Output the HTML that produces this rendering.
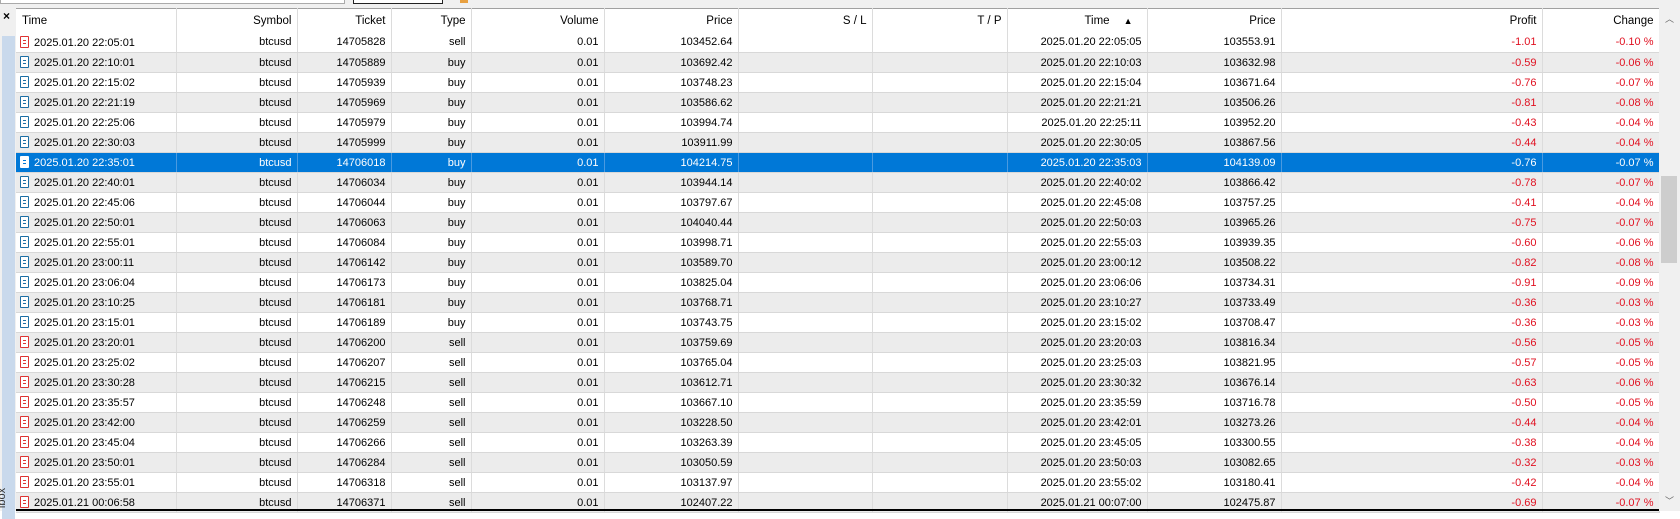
<!DOCTYPE html>
<html><head><meta charset="utf-8"><style>
*{margin:0;padding:0;box-sizing:border-box}
body{width:1680px;height:511px;overflow:hidden;background:#fff;font-family:"Liberation Sans",Arial,sans-serif;font-size:11px;color:#000;position:relative}
#top{position:absolute;left:0;top:0;width:1680px;height:8px;background:#f0f0f0}
#b1{position:absolute;left:0;top:-2px;width:345px;height:6px;background:#fff;border:1px solid #aaa}
#b2{position:absolute;left:353px;top:-2px;width:90px;height:6px;background:#fff;border:1px solid #222}
#o{position:absolute;left:460px;top:0;width:8px;height:3px;background:#e8a040}
#side{position:absolute;left:0;top:8px;width:16px;height:503px;background:#f0f0f0}
#strip{position:absolute;left:2px;top:28px;width:13px;height:483px;background:#c9d9ec}
#x{position:absolute;left:3px;top:9px;font-size:12px;font-weight:bold}
#lbl{position:absolute;left:-8px;top:492px;transform:rotate(-90deg);font-size:11px;color:#333}
table{position:absolute;left:16px;top:8px;border-collapse:collapse;table-layout:fixed;width:1643px}
td,th{height:20px;padding:0 5px 0 0;text-align:right;white-space:nowrap;overflow:hidden;border-right:1px solid #dcdcdc;border-bottom:1px solid #d8d8d8;font-weight:normal}
th{height:24px;border-top:1px solid #a0a0a0;border-bottom:none;font-size:11.5px;background:#fff}
th:first-child{text-align:left;padding-left:6px}
th.t{padding-right:14px}
th.t span{font-size:9px;margin-left:14px}
td:first-child{text-align:left;padding-left:4px}
tr:nth-child(odd) td{background:#ececec}
td.r{color:#e01020}
tr.s td{background:#0078d7!important;color:#fff!important;border-right-color:#4a9ae0}
.i{display:inline-block;width:9px;height:12px;border:1px solid #d33;border-radius:1px;vertical-align:-2px;margin-right:5px;position:relative;background:#fff}
.i:before,.i:after{content:"";position:absolute;left:2px;width:3px;height:1px;background:#d33}
.i:before{top:3px}.i:after{top:6px}
.b{border-color:#1c6ea4}.b:before,.b:after{background:#1c6ea4}
tr.s .i{border-color:#fff;background:#fff}tr.s .i:before,tr.s .i:after{background:#0078d7}
#sb{position:absolute;left:1659px;top:8px;width:21px;height:503px;background:#f0f0f0}
#th{position:absolute;left:1661px;top:176px;width:16px;height:87px;background:#cdcdcd}
#up,#dn{position:absolute;left:1665px;font-size:9px;color:#666}
#up{top:12px}#dn{top:494px}
#bot{position:absolute;left:16px;top:509px;width:1643px;height:2px;background:#000}
</style></head><body>
<div id="top"><div id="b1"></div><div id="b2"></div><div id="o"></div></div>
<div id="side"><div id="strip"></div></div><div id="x">×</div><div id="lbl">lbox</div>
<table>
<colgroup><col style="width:160px"><col style="width:121px"><col style="width:94px"><col style="width:80px"><col style="width:133px"><col style="width:134px"><col style="width:134px"><col style="width:135px"><col style="width:140px"><col style="width:134px"><col style="width:261px"><col style="width:117px"></colgroup>
<tr><th>Time</th><th>Symbol</th><th>Ticket</th><th>Type</th><th>Volume</th><th>Price</th><th>S / L</th><th>T / P</th><th class="t">Time<span>▲</span></th><th>Price</th><th>Profit</th><th>Change</th></tr>
<tr><td><i class="i"></i>2025.01.20 22:05:01</td><td>btcusd</td><td>14705828</td><td>sell</td><td>0.01</td><td>103452.64</td><td></td><td></td><td>2025.01.20 22:05:05</td><td>103553.91</td><td class="r">-1.01</td><td class="r">-0.10 %</td></tr>
<tr><td><i class="i b"></i>2025.01.20 22:10:01</td><td>btcusd</td><td>14705889</td><td>buy</td><td>0.01</td><td>103692.42</td><td></td><td></td><td>2025.01.20 22:10:03</td><td>103632.98</td><td class="r">-0.59</td><td class="r">-0.06 %</td></tr>
<tr><td><i class="i b"></i>2025.01.20 22:15:02</td><td>btcusd</td><td>14705939</td><td>buy</td><td>0.01</td><td>103748.23</td><td></td><td></td><td>2025.01.20 22:15:04</td><td>103671.64</td><td class="r">-0.76</td><td class="r">-0.07 %</td></tr>
<tr><td><i class="i b"></i>2025.01.20 22:21:19</td><td>btcusd</td><td>14705969</td><td>buy</td><td>0.01</td><td>103586.62</td><td></td><td></td><td>2025.01.20 22:21:21</td><td>103506.26</td><td class="r">-0.81</td><td class="r">-0.08 %</td></tr>
<tr><td><i class="i b"></i>2025.01.20 22:25:06</td><td>btcusd</td><td>14705979</td><td>buy</td><td>0.01</td><td>103994.74</td><td></td><td></td><td>2025.01.20 22:25:11</td><td>103952.20</td><td class="r">-0.43</td><td class="r">-0.04 %</td></tr>
<tr><td><i class="i b"></i>2025.01.20 22:30:03</td><td>btcusd</td><td>14705999</td><td>buy</td><td>0.01</td><td>103911.99</td><td></td><td></td><td>2025.01.20 22:30:05</td><td>103867.56</td><td class="r">-0.44</td><td class="r">-0.04 %</td></tr>
<tr class="s"><td><i class="i b"></i>2025.01.20 22:35:01</td><td>btcusd</td><td>14706018</td><td>buy</td><td>0.01</td><td>104214.75</td><td></td><td></td><td>2025.01.20 22:35:03</td><td>104139.09</td><td class="r">-0.76</td><td class="r">-0.07 %</td></tr>
<tr><td><i class="i b"></i>2025.01.20 22:40:01</td><td>btcusd</td><td>14706034</td><td>buy</td><td>0.01</td><td>103944.14</td><td></td><td></td><td>2025.01.20 22:40:02</td><td>103866.42</td><td class="r">-0.78</td><td class="r">-0.07 %</td></tr>
<tr><td><i class="i b"></i>2025.01.20 22:45:06</td><td>btcusd</td><td>14706044</td><td>buy</td><td>0.01</td><td>103797.67</td><td></td><td></td><td>2025.01.20 22:45:08</td><td>103757.25</td><td class="r">-0.41</td><td class="r">-0.04 %</td></tr>
<tr><td><i class="i b"></i>2025.01.20 22:50:01</td><td>btcusd</td><td>14706063</td><td>buy</td><td>0.01</td><td>104040.44</td><td></td><td></td><td>2025.01.20 22:50:03</td><td>103965.26</td><td class="r">-0.75</td><td class="r">-0.07 %</td></tr>
<tr><td><i class="i b"></i>2025.01.20 22:55:01</td><td>btcusd</td><td>14706084</td><td>buy</td><td>0.01</td><td>103998.71</td><td></td><td></td><td>2025.01.20 22:55:03</td><td>103939.35</td><td class="r">-0.60</td><td class="r">-0.06 %</td></tr>
<tr><td><i class="i b"></i>2025.01.20 23:00:11</td><td>btcusd</td><td>14706142</td><td>buy</td><td>0.01</td><td>103589.70</td><td></td><td></td><td>2025.01.20 23:00:12</td><td>103508.22</td><td class="r">-0.82</td><td class="r">-0.08 %</td></tr>
<tr><td><i class="i b"></i>2025.01.20 23:06:04</td><td>btcusd</td><td>14706173</td><td>buy</td><td>0.01</td><td>103825.04</td><td></td><td></td><td>2025.01.20 23:06:06</td><td>103734.31</td><td class="r">-0.91</td><td class="r">-0.09 %</td></tr>
<tr><td><i class="i b"></i>2025.01.20 23:10:25</td><td>btcusd</td><td>14706181</td><td>buy</td><td>0.01</td><td>103768.71</td><td></td><td></td><td>2025.01.20 23:10:27</td><td>103733.49</td><td class="r">-0.36</td><td class="r">-0.03 %</td></tr>
<tr><td><i class="i b"></i>2025.01.20 23:15:01</td><td>btcusd</td><td>14706189</td><td>buy</td><td>0.01</td><td>103743.75</td><td></td><td></td><td>2025.01.20 23:15:02</td><td>103708.47</td><td class="r">-0.36</td><td class="r">-0.03 %</td></tr>
<tr><td><i class="i"></i>2025.01.20 23:20:01</td><td>btcusd</td><td>14706200</td><td>sell</td><td>0.01</td><td>103759.69</td><td></td><td></td><td>2025.01.20 23:20:03</td><td>103816.34</td><td class="r">-0.56</td><td class="r">-0.05 %</td></tr>
<tr><td><i class="i"></i>2025.01.20 23:25:02</td><td>btcusd</td><td>14706207</td><td>sell</td><td>0.01</td><td>103765.04</td><td></td><td></td><td>2025.01.20 23:25:03</td><td>103821.95</td><td class="r">-0.57</td><td class="r">-0.05 %</td></tr>
<tr><td><i class="i"></i>2025.01.20 23:30:28</td><td>btcusd</td><td>14706215</td><td>sell</td><td>0.01</td><td>103612.71</td><td></td><td></td><td>2025.01.20 23:30:32</td><td>103676.14</td><td class="r">-0.63</td><td class="r">-0.06 %</td></tr>
<tr><td><i class="i"></i>2025.01.20 23:35:57</td><td>btcusd</td><td>14706248</td><td>sell</td><td>0.01</td><td>103667.10</td><td></td><td></td><td>2025.01.20 23:35:59</td><td>103716.78</td><td class="r">-0.50</td><td class="r">-0.05 %</td></tr>
<tr><td><i class="i"></i>2025.01.20 23:42:00</td><td>btcusd</td><td>14706259</td><td>sell</td><td>0.01</td><td>103228.50</td><td></td><td></td><td>2025.01.20 23:42:01</td><td>103273.26</td><td class="r">-0.44</td><td class="r">-0.04 %</td></tr>
<tr><td><i class="i"></i>2025.01.20 23:45:04</td><td>btcusd</td><td>14706266</td><td>sell</td><td>0.01</td><td>103263.39</td><td></td><td></td><td>2025.01.20 23:45:05</td><td>103300.55</td><td class="r">-0.38</td><td class="r">-0.04 %</td></tr>
<tr><td><i class="i"></i>2025.01.20 23:50:01</td><td>btcusd</td><td>14706284</td><td>sell</td><td>0.01</td><td>103050.59</td><td></td><td></td><td>2025.01.20 23:50:03</td><td>103082.65</td><td class="r">-0.32</td><td class="r">-0.03 %</td></tr>
<tr><td><i class="i"></i>2025.01.20 23:55:01</td><td>btcusd</td><td>14706318</td><td>sell</td><td>0.01</td><td>103137.97</td><td></td><td></td><td>2025.01.20 23:55:02</td><td>103180.41</td><td class="r">-0.42</td><td class="r">-0.04 %</td></tr>
<tr><td><i class="i"></i>2025.01.21 00:06:58</td><td>btcusd</td><td>14706371</td><td>sell</td><td>0.01</td><td>102407.22</td><td></td><td></td><td>2025.01.21 00:07:00</td><td>102475.87</td><td class="r">-0.69</td><td class="r">-0.07 %</td></tr>
</table>
<div id="sb"></div><div id="th"></div><div id="up">︿</div><div id="dn">﹀</div>
<div id="bot"></div>
</body></html>
